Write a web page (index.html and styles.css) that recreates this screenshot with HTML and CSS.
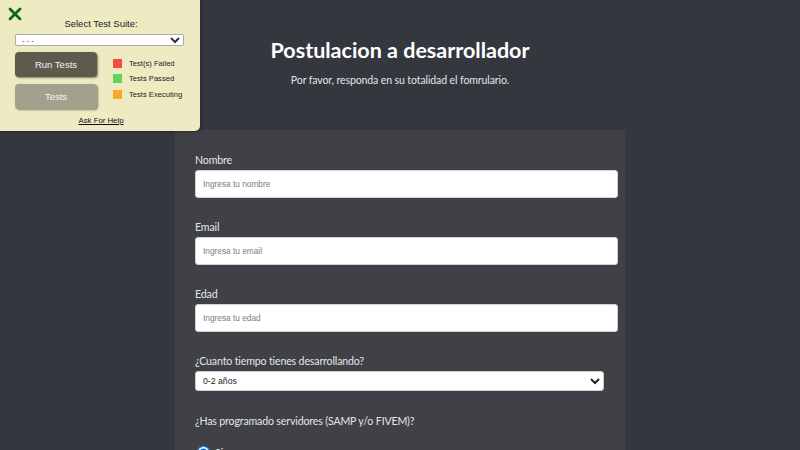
FILE: index.html
```html
<!DOCTYPE html>
<html lang="es">
<head>
<meta charset="utf-8">
<title>Postulacion a desarrollador</title>
<link rel="stylesheet" href="styles.css">
</head>
<body>
<header class="header">
  <h1 class="title">Postulacion a desarrollador</h1>
  <p class="description">Por favor, responda en su totalidad el fomrulario.</p>
</header>
<form class="survey">
  <div class="group">
    <label class="label" for="name">Nombre</label>
    <input class="field" id="name" type="text" placeholder="Ingresa tu nombre">
  </div>
  <div class="group">
    <label class="label" for="email">Email</label>
    <input class="field" id="email" type="email" placeholder="Ingresa tu email">
  </div>
  <div class="group">
    <label class="label" for="age">Edad</label>
    <input class="field" id="age" type="number" placeholder="Ingresa tu edad">
  </div>
  <div class="group group-select">
    <label class="label" for="time">¿Cuanto tiempo tienes desarrollando?</label>
    <select class="dropdown" id="time">
      <option>0-2 años</option>
      <option>2-5 años</option>
    </select>
  </div>
  <div class="group">
    <p class="label">¿Has programado servidores (SAMP y/o FIVEM)?</p>
    <label class="radio"><input class="radio-input" type="radio" name="srv" checked>Si</label>
  </div>
</form>

<div class="suite">
  <svg class="close" viewBox="0 0 14 14" width="14" height="14"><path d="M2 2 L12 12 M12 2 L2 12" stroke="#0b6a0b" stroke-width="2.8" stroke-linecap="round"/></svg>
  <div class="suite-title">Select Test Suite:</div>
  <select class="suite-select"><option>- - -</option></select>
  <div class="suite-row">
    <div class="suite-buttons">
      <button class="btn btn-run" type="button">Run Tests</button>
      <button class="btn btn-tests" type="button">Tests</button>
    </div>
    <ul class="legend">
      <li class="legend-item"><span class="swatch swatch-red"></span>Test(s) Failed</li>
      <li class="legend-item"><span class="swatch swatch-green"></span>Tests Passed</li>
      <li class="legend-item"><span class="swatch swatch-orange"></span>Tests Executing</li>
    </ul>
  </div>
  <a class="help" href="#">Ask For Help</a>
</div>
</body>
</html>
```

FILE: styles.css
```css
* { box-sizing: border-box; }
html, body { margin: 0; padding: 0; }
body {
  background: #35373e;
  color: #e8e8e8;
  font-family: Lato, "Open Sans", sans-serif;
  height: 450px;
  overflow: hidden;
}
.header {
  text-align: center;
  padding-top: 35px;
  height: 130px;
}
.title {
  margin: 0;
  font-size: 21.5px;
  line-height: 30px;
  font-weight: 700;
  color: #ffffff;
}
.description {
  margin: 6px 0 0;
  font-size: 10.5px;
  letter-spacing: -0.1px;
  line-height: 18px;
  color: #e4e4e4;
}
.survey {
  width: 450px;
  margin: 0 0 0 175px;
  background: #3f4147;
  padding: 22px 7px 20px 20px;
  min-height: 320px;
}
.group { margin-bottom: 21px; }
.group-select { margin-bottom: 22px; }
.label {
  display: block;
  margin: 0 0 2px;
  font-size: 10.6px;
  letter-spacing: -0.15px;
  line-height: 16px;
  color: #e6e6e6;
}
.field {
  display: block;
  width: 100%;
  height: 28px;
  border: 1px solid #cfd3d8;
  border-radius: 3px;
  background: #fff;
  padding: 0 7px;
  font-family: "Liberation Sans", Arial, sans-serif;
  font-size: 8.3px;
  color: #333;
}
.field::placeholder { color: #7a7d82; }
.dropdown {
  display: block;
  width: 409px;
  height: 20px;
  border: 1px solid #ccc;
  border-radius: 3px;
  background: #fff;
  font-family: "Liberation Sans", Arial, sans-serif;
  font-size: 8.7px;
  color: #222;
  padding: 0 3px;
}
.radio {
  display: flex;
  align-items: center;
  margin-top: 17px;
  font-size: 10.6px;
}
.radio-input { margin: 0 5px 0 2px; }

.suite {
  position: absolute;
  top: 0;
  left: 0;
  width: 200px;
  height: 131px;
  background: #eeeac2;
  border-radius: 0 0 5px 0;
  box-shadow: 1px 1px 3px rgba(0,0,0,0.3);
  font-family: "Liberation Sans", Arial, sans-serif;
  color: #222;
  padding: 17px 15px 0 15px;
}
.close {
  position: absolute;
  top: 7px;
  left: 8px;
}
.suite-title {
  text-align: center;
  font-size: 9.5px;
  line-height: 13px;
  margin-left: 2px;
}
.suite-select {
  display: block;
  width: 169px;
  height: 12px;
  margin-top: 4px;
  font-size: 7.5px;
  padding: 0 2px;
  border: 1px solid #aaa;
  border-radius: 2px;
  background: #fff;
  color: #333;
}
.suite-row {
  display: flex;
  margin-top: 6px;
}
.suite-buttons {
  display: flex;
  flex-direction: column;
  gap: 7px;
  width: 82px;
  flex: none;
}
.btn {
  height: 25px;
  border: none;
  border-radius: 4px;
  font-family: "Liberation Sans", Arial, sans-serif;
  font-size: 9.5px;
  color: #f4f4f4;
  box-shadow: 1px 1px 2px rgba(0,0,0,0.45);
}
.btn-run { background: #5e5b4d; }
.btn-tests { background: #a3a18e; }
.legend {
  list-style: none;
  margin: 6px 0 0 16px;
  padding: 0;
}
.legend-item {
  display: flex;
  align-items: center;
  white-space: nowrap;
  font-size: 7.6px;
  height: 10px;
  margin-bottom: 5.5px;
}
.swatch {
  display: inline-block;
  width: 9px;
  height: 9px;
  margin-right: 7px;
  flex: none;
}
.swatch-red { background: #f44b3f; }
.swatch-green { background: #5fd65a; }
.swatch-orange { background: #f9a825; }
.help {
  display: block;
  text-align: center;
  font-size: 7.8px;
  color: #111;
  margin-top: 7px;
  margin-left: 2px;
}
```
